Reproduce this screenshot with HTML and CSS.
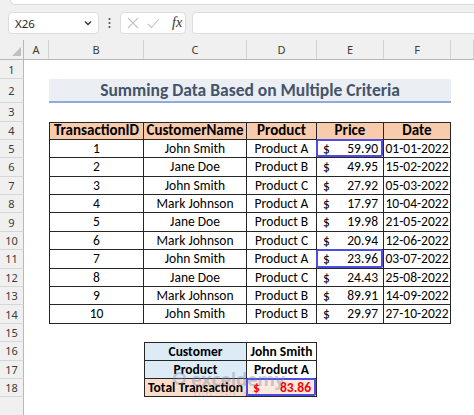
FILE: index.html
```html
<!DOCTYPE html>
<html lang="en">
<head>
    <meta charset="UTF-8">
    <meta name="viewport" content="width=device-width, initial-scale=1.0">
    <title>Summing Data Based on Multiple Criteria</title>
    <link rel="stylesheet" href="styles.css">
</head>
<body>
    <div class="topbar">
        <div class="ribbon-edge"></div>
        <div class="formula-row">
            <div class="namebox">
                <span>X26</span>
                <svg width="8" height="6" viewBox="0 0 8 6"><path d="M1 1.5 L4 4.5 L7 1.5" fill="none" stroke="#333" stroke-width="1.4"/></svg>
            </div>
            <div class="dots">
                <svg width="3" height="12" viewBox="0 0 3 12"><circle cx="1.5" cy="2" r="1.1" fill="#555"/><circle cx="1.5" cy="6" r="1.1" fill="#555"/><circle cx="1.5" cy="10" r="1.1" fill="#555"/></svg>
            </div>
            <div class="fx-buttons">
                <svg width="12" height="12" viewBox="0 0 12 12"><path d="M1 1 L11 11 M11 1 L1 11" stroke="#c4c4c4" stroke-width="1.1"/></svg>
                <svg width="13" height="11" viewBox="0 0 13 11"><path d="M1 6 L4.5 9.5 L12 1" fill="none" stroke="#c4c4c4" stroke-width="1.1"/></svg>
                <span class="fx">fx</span>
            </div>
            <div class="formula-input"></div>
        </div>
    </div>

    <div class="sheet">
        <div class="row colhead">
            <div class="corner">
                <svg width="9" height="9" viewBox="0 0 9 9"><path d="M9 0 L9 9 L0 9 Z" fill="#bfbfbf"/></svg>
            </div>
            <div class="ch">A</div>
            <div class="ch">B</div>
            <div class="ch">C</div>
            <div class="ch">D</div>
            <div class="ch">E</div>
            <div class="ch">F</div>
            <div class="ch"></div>
        </div>

        <div class="row r1"><div class="rh">1</div></div>

        <div class="row r2">
            <div class="rh">2</div>
            <div class="c"></div>
            <div class="title">Summing Data Based on Multiple Criteria</div>
        </div>

        <div class="row r3"><div class="rh">3</div></div>

        <div class="row r-data">
            <div class="rh">4</div>
            <div class="c"></div>
            <div class="c bd bl bt head">TransactionID</div>
            <div class="c bd bt head">CustomerName</div>
            <div class="c bd bt head">Product</div>
            <div class="c bd bt head">Price</div>
            <div class="c bd bt head">Date</div>
        </div>

        <div class="row r-data">
            <div class="rh">5</div>
            <div class="c"></div>
            <div class="c bd bl">1</div>
            <div class="c bd">John Smith</div>
            <div class="c bd">Product A</div>
            <div class="c bd money mark"><span>$</span><span>59.90</span></div>
            <div class="c bd">01-01-2022</div>
        </div>
        <div class="row r-data">
            <div class="rh">6</div>
            <div class="c"></div>
            <div class="c bd bl">2</div>
            <div class="c bd">Jane Doe</div>
            <div class="c bd">Product B</div>
            <div class="c bd money"><span>$</span><span>49.95</span></div>
            <div class="c bd">15-02-2022</div>
        </div>
        <div class="row r-data">
            <div class="rh">7</div>
            <div class="c"></div>
            <div class="c bd bl">3</div>
            <div class="c bd">John Smith</div>
            <div class="c bd">Product C</div>
            <div class="c bd money"><span>$</span><span>27.92</span></div>
            <div class="c bd">05-03-2022</div>
        </div>
        <div class="row r-data">
            <div class="rh">8</div>
            <div class="c"></div>
            <div class="c bd bl">4</div>
            <div class="c bd">Mark Johnson</div>
            <div class="c bd">Product A</div>
            <div class="c bd money"><span>$</span><span>17.97</span></div>
            <div class="c bd">10-04-2022</div>
        </div>
        <div class="row r-data">
            <div class="rh">9</div>
            <div class="c"></div>
            <div class="c bd bl">5</div>
            <div class="c bd">Jane Doe</div>
            <div class="c bd">Product B</div>
            <div class="c bd money"><span>$</span><span>19.98</span></div>
            <div class="c bd">21-05-2022</div>
        </div>
        <div class="row r-data">
            <div class="rh">10</div>
            <div class="c"></div>
            <div class="c bd bl">6</div>
            <div class="c bd">Mark Johnson</div>
            <div class="c bd">Product C</div>
            <div class="c bd money"><span>$</span><span>20.94</span></div>
            <div class="c bd">12-06-2022</div>
        </div>
        <div class="row r-data">
            <div class="rh">11</div>
            <div class="c"></div>
            <div class="c bd bl">7</div>
            <div class="c bd">John Smith</div>
            <div class="c bd">Product A</div>
            <div class="c bd money mark"><span>$</span><span>23.96</span></div>
            <div class="c bd">03-07-2022</div>
        </div>
        <div class="row r-data">
            <div class="rh">12</div>
            <div class="c"></div>
            <div class="c bd bl">8</div>
            <div class="c bd">Jane Doe</div>
            <div class="c bd">Product C</div>
            <div class="c bd money"><span>$</span><span>24.43</span></div>
            <div class="c bd">25-08-2022</div>
        </div>
        <div class="row r-data">
            <div class="rh">13</div>
            <div class="c"></div>
            <div class="c bd bl">9</div>
            <div class="c bd">Mark Johnson</div>
            <div class="c bd">Product B</div>
            <div class="c bd money"><span>$</span><span>89.91</span></div>
            <div class="c bd">14-09-2022</div>
        </div>
        <div class="row r-data">
            <div class="rh">14</div>
            <div class="c"></div>
            <div class="c bd bl">10</div>
            <div class="c bd">John Smith</div>
            <div class="c bd">Product B</div>
            <div class="c bd money"><span>$</span><span>29.97</span></div>
            <div class="c bd">27-10-2022</div>
        </div>

        <div class="row r-data"><div class="rh">15</div></div>

        <div class="row r-data">
            <div class="rh">16</div>
            <div class="c"></div>
            <div class="c"></div>
            <div class="c bd bl bt label">Customer</div>
            <div class="c bd bt strong">John Smith</div>
        </div>
        <div class="row r-data">
            <div class="rh">17</div>
            <div class="c"></div>
            <div class="c"></div>
            <div class="c bd bl label">Product</div>
            <div class="c bd strong">Product A</div>
        </div>
        <div class="row r-data">
            <div class="rh">18</div>
            <div class="c"></div>
            <div class="c"></div>
            <div class="c bd bl label total">Total Transaction</div>
            <div class="c bd money result mark"><span>$</span><span>83.86</span></div>
        </div>

        <div class="row r-rest"><div class="rh"></div></div>

        <!-- site watermark lying over the lookup table -->
        <div class="watermark">
            <svg width="13" height="13" viewBox="0 0 14 14"><circle cx="7" cy="7" r="5.8" fill="none" stroke="currentColor" stroke-width="2.4"/><path d="M3.5 7 H10.5" stroke="currentColor" stroke-width="2"/></svg>
            <div class="wm-text">
                <span class="wm-name">exceldemy</span>
                <span class="wm-sub">EXCEL · DATA · BI</span>
            </div>
        </div>
    </div>
</body>
</html>
```
FILE: styles.css
```css
* {
    box-sizing: border-box;
}

body {
    margin: 0;
    background: #ffffff;
    font-family: Carlito, Lato, "Liberation Sans", sans-serif;
    color: #000000;
    overflow: hidden;
}

/* formula bar */
.topbar {
    height: 40px;
    background: #f0f0f0;
}

.ribbon-edge {
    height: 5px;
    margin-left: 10px;
    background: #ffffff;
    border-left: 1px solid #dadada;
    border-bottom: 1px solid #dadada;
    border-bottom-left-radius: 5px;
}

.formula-row {
    display: flex;
    align-items: center;
    height: 22px;
    margin-top: 7px;
    padding-left: 8px;
}

.namebox {
    width: 91px;
    height: 22px;
    display: flex;
    align-items: center;
    justify-content: space-between;
    padding: 0 6px 0 6px;
    background: #ffffff;
    border: 1px solid #dcdcdc;
    border-radius: 4px;
    font: 11.5px "Noto Sans", "Open Sans", sans-serif;
    color: #262626;
}

.dots {
    width: 21px;
    display: flex;
    justify-content: center;
}

.fx-buttons {
    width: 66px;
    height: 22px;
    display: flex;
    align-items: center;
    gap: 8px;
    padding-left: 6px;
    background: #ffffff;
    border: 1px solid #dcdcdc;
    border-radius: 4px;
}

.fx {
    margin-left: 4px;
    font: italic 14px "Liberation Serif", serif;
    color: #303030;
}

.formula-input {
    flex: 1;
    height: 22px;
    margin-left: 6px;
    margin-right: -10px;
    background: #ffffff;
    border: 1px solid #dcdcdc;
    border-radius: 4px;
}

/* grid */
.sheet {
    position: relative;
}

.row {
    display: grid;
    grid-template-columns: 24px 25px 95px 103px 70px 67px 67px 1fr;
}

.colhead {
    height: 20px;
    background: #f0f0f0;
    border-bottom: 1px solid #b8b8b8;
}

.corner {
    display: flex;
    align-items: flex-end;
    justify-content: flex-end;
    padding: 0 2px 3px 0;
    border-right: 1px solid #b8b8b8;
}

.ch {
    display: flex;
    align-items: center;
    justify-content: center;
    border-right: 1px solid #d2d2d2;
    font: 11px "Noto Sans", "Open Sans", sans-serif;
    color: #3a3a3a;
}

.r1 {
    height: 19px;
}

.r2 {
    height: 24px;
}

.r3 {
    height: 18.5px;
}

.r-data {
    height: 18.4px;
}

.r-rest {
    height: 30px;
}

.rh {
    display: flex;
    align-items: center;
    justify-content: center;
    background: #f0f0f0;
    border-right: 1px solid #b8b8b8;
    border-bottom: 1px solid #d6d6d6;
    font: 11px "Noto Sans", "Open Sans", sans-serif;
    color: #3a3a3a;
}

.c {
    display: flex;
    align-items: center;
    justify-content: center;
    font-size: 13.5px;
    line-height: 1;
    white-space: nowrap;
    overflow: hidden;
}

.bd {
    border-right: 1px solid #262626;
    border-bottom: 1px solid #262626;
}

.bl {
    border-left: 1px solid #262626;
}

.bt {
    border-top: 1px solid #262626;
}

.title {
    grid-column: span 5;
    display: flex;
    align-items: center;
    justify-content: center;
    background: #ebeef3;
    border-bottom: 2px solid #8faadc;
    font-size: 17.5px;
    font-weight: bold;
    color: #44546a;
}

.head {
    background: #f8cbad;
    font-size: 15px;
    font-weight: bold;
}

.money {
    justify-content: space-between;
    padding: 0 5px 0 6px;
}

.mark {
    position: relative;
    overflow: visible;
}

.mark::after {
    content: '';
    position: absolute;
    left: -1px;
    top: -1px;
    right: 0;
    bottom: 0;
    border: 2px solid #4d4de3;
    border-radius: 2px;
}

.label {
    background: #ddebf7;
    font-weight: bold;
}

.label.total {
    background: #fbdcc8;
}

.strong {
    font-weight: bold;
}

.result {
    background: #fde9dd;
    color: #ff0000;
    font-weight: bold;
}

.watermark {
    position: absolute;
    left: 173px;
    top: 327px;
    display: flex;
    align-items: flex-start;
    gap: 5px;
    color: rgba(120, 140, 190, 0.42);
    pointer-events: none;
}

.watermark svg {
    margin-top: 5px;
}

.wm-text {
    display: flex;
    flex-direction: column;
    align-items: flex-start;
    line-height: 1;
}

.wm-name {
    font: bold 18px "Open Sans", sans-serif;
    letter-spacing: -0.3px;
}

.wm-sub {
    margin-left: 3px;
    font: 5px "Open Sans", sans-serif;
    letter-spacing: 1px;
}
```
